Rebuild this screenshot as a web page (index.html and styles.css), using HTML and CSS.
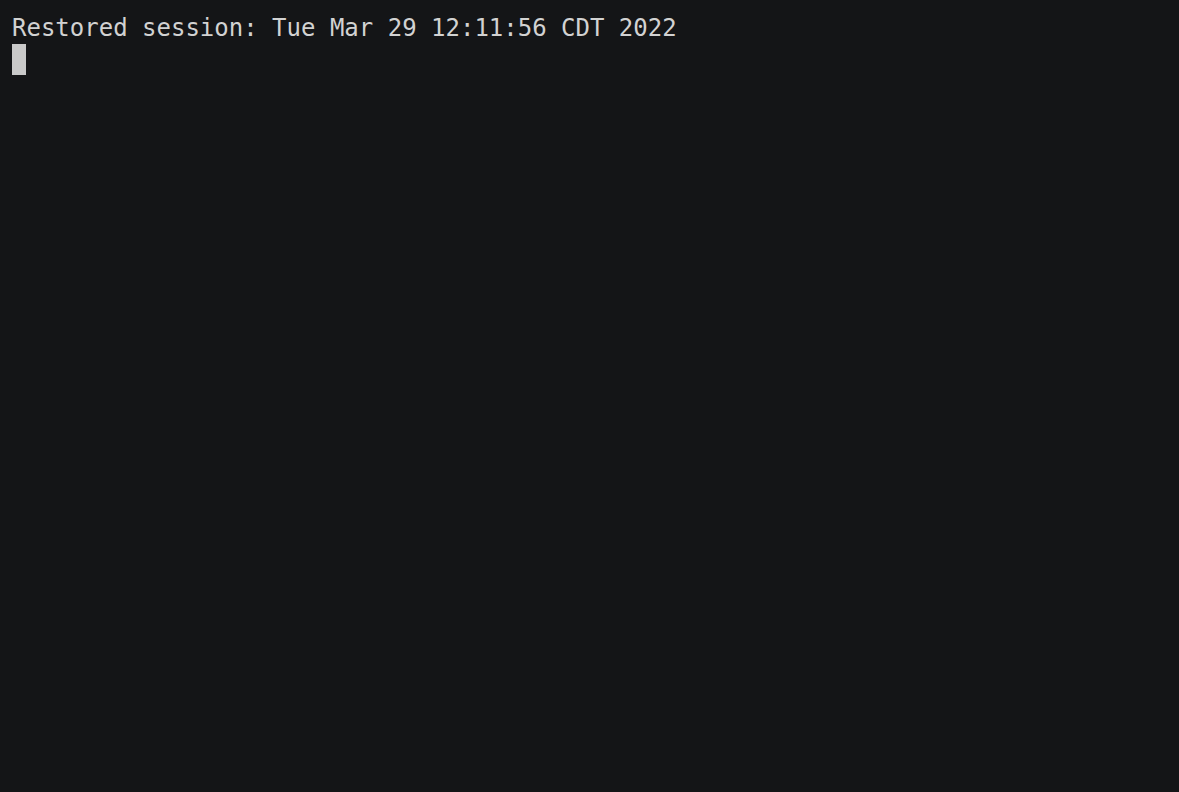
FILE: index.html
```html
<!DOCTYPE html>
<html>
<head>
<meta charset="utf-8">
<link rel="stylesheet" href="styles.css">
</head>
<body>
<div class="term">
  <div class="line">Restored session: Tue Mar 29 12:11:56 CDT 2022</div>
  <div class="line"><span class="cursor"></span></div>
</div>
</body>
</html>
```
FILE: styles.css
```css
html, body {
  margin: 0;
  padding: 0;
  background: #141517;
  height: 100%;
}
.term {
  padding: 13px 12px;
  font-family: "DejaVu Sans Mono", monospace;
  font-size: 24px;
  line-height: 31px;
  color: #d2d2d2;
}
.line {
  height: 31px;
  white-space: pre;
}
.cursor {
  display: inline-block;
  width: 14px;
  height: 31px;
  background: #c9c9c9;
  vertical-align: top;
}
```
